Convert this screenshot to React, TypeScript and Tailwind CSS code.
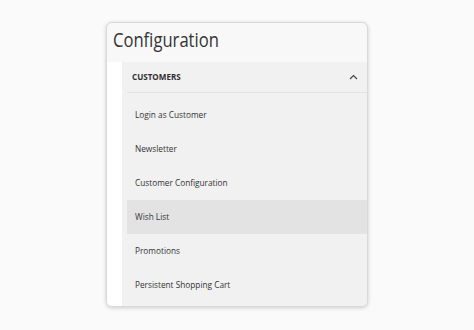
const items = [
  "Login as Customer",
  "Newsletter",
  "Customer Configuration",
  "Wish List",
  "Promotions",
  "Persistent Shopping Cart",
];

const App = () => {
  return (
    <div
      className="w-[474px] h-[330px] bg-[#fafafa] pt-[22px] pl-[106px]"
      style={{ fontFamily: '"Open Sans", "Liberation Sans", sans-serif' }}
    >
      {/* Config card */}
      <div className="w-[262px] h-[285px] bg-[#f8f8f8] border border-[#d9d9d9] rounded-[6px] shadow-[0_1px_4px_rgba(0,0,0,0.18)] overflow-hidden flex flex-col">
        <div className="h-[39px] pl-[6px] pb-[5px] flex items-center text-[20px] text-[#333333]">
          <span className="inline-block origin-left scale-x-[0.83] whitespace-nowrap">
            Configuration
          </span>
        </div>

        <div className="flex flex-1">
          <div className="w-[15px] bg-white" />
          <div className="flex-1 bg-[#f1f1f1] flex flex-col">
            {/* Section header */}
            <div className="h-[30px] pl-[10px] pr-[9px] flex items-center justify-between">
              <span className="inline-block origin-left scale-x-[0.85] text-[9.5px] font-bold text-[#303030] whitespace-nowrap">
                CUSTOMERS
              </span>
              <svg width="9" height="6" viewBox="0 0 9 6" fill="none">
                <path d="M1 5L4.5 1.5L8 5" stroke="#444" strokeWidth="1.2" />
              </svg>
            </div>

            <div className="ml-[5px] border-t border-[#e3e3e3] pt-[5px]">
              {items.map((item) => (
                <div
                  key={item}
                  className={`h-[34px] pl-[8px] flex items-center text-[9.5px] text-[#333333] ${
                    item === "Wish List" ? "bg-[#e3e3e3]" : ""
                  }`}
                >
                  <span className="inline-block origin-left scale-x-[0.87] whitespace-nowrap">
                    {item}
                  </span>
                </div>
              ))}
            </div>
          </div>
        </div>
      </div>
    </div>
  );
};

export default App;
